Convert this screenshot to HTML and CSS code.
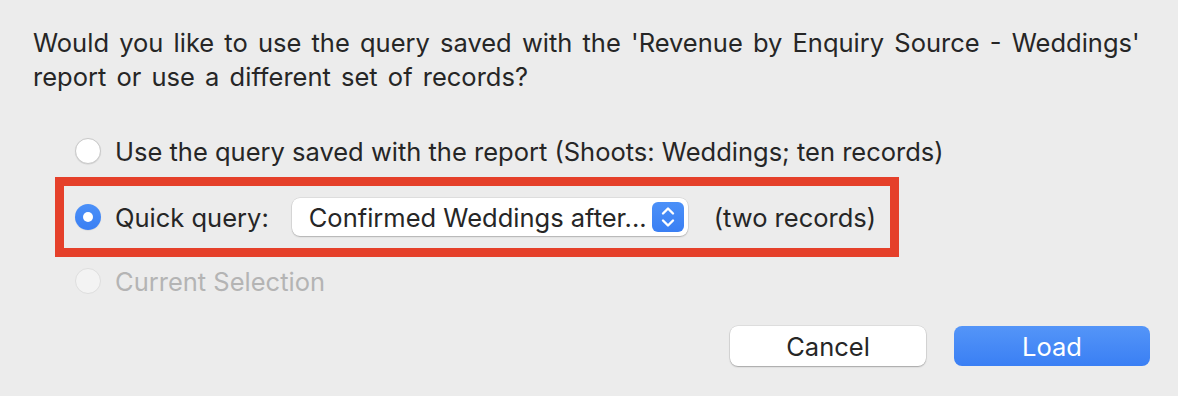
FILE: index.html
```html
<!DOCTYPE html>
<html>
<head>
<meta charset="utf-8">
<link rel="stylesheet" href="styles.css">
</head>
<body>
<div class="dialog">
  <p class="prompt">Would you like to use the query saved with the 'Revenue by Enquiry Source - Weddings' report or use a different set of records?</p>
  <div class="options">
    <div class="option">
      <span class="radio"></span>
      <span class="label">Use the query saved with the report (Shoots: Weddings; ten records)</span>
    </div>
    <div class="highlight">
      <div class="option">
        <span class="radio checked"></span>
        <span class="label">Quick query:</span>
        <div class="popup">
          <span class="popup-text">Confirmed Weddings after...</span>
          <span class="stepper">
            <svg width="32" height="30" viewBox="0 0 32 30">
              <path d="M11 11.5 L16 6.5 L21 11.5" fill="none" stroke="#fff" stroke-width="2.4" stroke-linecap="round" stroke-linejoin="round"/>
              <path d="M11 18.5 L16 23.5 L21 18.5" fill="none" stroke="#fff" stroke-width="2.4" stroke-linecap="round" stroke-linejoin="round"/>
            </svg>
          </span>
        </div>
        <span class="label count">(two records)</span>
      </div>
    </div>
    <div class="option disabled">
      <span class="radio"></span>
      <span class="label">Current Selection</span>
    </div>
  </div>
  <div class="buttons">
    <button class="btn">Cancel</button>
    <button class="btn primary">Load</button>
  </div>
</div>
</body>
</html>
```
FILE: styles.css
```css
html, body {
  margin: 0;
  padding: 0;
  background: #ececec;
}
body {
  width: 1178px;
  height: 396px;
  overflow: hidden;
  font-family: "Inter", "Roboto", "Liberation Sans", sans-serif;
  color: #262626;
}
.dialog {
  padding: 26px 28px 0 33px;
  display: flex;
  flex-direction: column;
}
.prompt {
  margin: 0;
  font-size: 25.5px;
  line-height: 34px;
  word-spacing: 3px;
  width: 1125px;
}
.options {
  margin-top: 37px;
  margin-left: 42px;
  display: flex;
  flex-direction: column;
}
.option {
  display: flex;
  align-items: center;
  height: 40px;
  font-size: 25.5px;
}
.radio {
  width: 26px;
  height: 26px;
  border-radius: 50%;
  box-sizing: border-box;
  background: #ffffff;
  border: 1px solid #c9c9c9;
  box-shadow: 0 0.5px 1px rgba(0,0,0,0.12);
  flex: none;
  margin-right: 14px;
  position: relative;
}
.radio.checked {
  background: linear-gradient(#4b90f8, #3a7ff3);
  border: none;
}
.radio.checked::after {
  content: "";
  position: absolute;
  left: 8px;
  top: 8px;
  width: 10px;
  height: 10px;
  border-radius: 50%;
  background: #fff;
}
.highlight {
  margin: 6px 0 4px -20px;
  width: 815px;
  border: 9px solid #e5402a;
  padding: 11px 0 11px 11px;
}
.popup {
  margin-left: 23px;
  width: 396px;
  height: 38px;
  box-sizing: border-box;
  background: #fff;
  border-radius: 8px;
  box-shadow: 0 0 0 0.5px rgba(0,0,0,0.12), 0 1px 1.5px rgba(0,0,0,0.2);
  display: flex;
  align-items: center;
  justify-content: space-between;
  padding: 0 4px 0 17px;
}
.stepper {
  width: 32px;
  height: 30px;
  border-radius: 6px;
  background: linear-gradient(#4b90f8, #3a7ff3);
  display: flex;
}
.count {
  margin-left: 26px;
}
.disabled .label {
  color: #b4b4b4;
}
.disabled .radio {
  background: #f3f3f3;
  border-color: #dedede;
  box-shadow: none;
}
.buttons {
  display: flex;
  justify-content: flex-end;
  gap: 28px;
  margin-top: 25px;
}
.btn {
  width: 196px;
  height: 40px;
  border: none;
  border-radius: 8px;
  background: #fff;
  font-family: inherit;
  font-size: 25.5px;
  color: #262626;
  box-shadow: 0 0 0 0.5px rgba(0,0,0,0.12), 0 1px 1.5px rgba(0,0,0,0.25);
  padding: 0;
}
.btn.primary {
  background: linear-gradient(#5495f8, #3a7ff4);
  color: #fff;
  box-shadow: none;
}
```
